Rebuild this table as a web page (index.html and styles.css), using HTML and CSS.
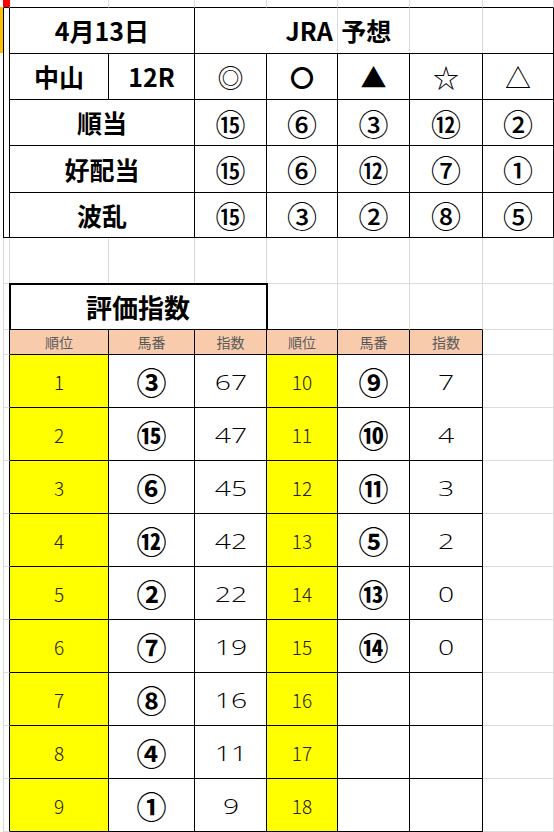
FILE: index.html
```html
<!DOCTYPE html>
<html lang="ja">
<head>
<meta charset="utf-8">
<title>JRA 予想</title>
<link rel="stylesheet" href="styles.css">
</head>
<body>
<div class="page">
  <div class="sheet">
    <!-- row 0 -->
    <div class="c a bb"></div><div class="c bb"></div><div class="c bb"></div><div class="c bb"></div><div class="c bb"></div><div class="c bb"></div><div class="c bb"></div><div class="c bb"></div>
    <!-- row 1 -->
    <div class="c a bl k rows5"></div>
    <div class="c k span2 big">4月13日</div>
    <div class="c k span5 big jra">JRA 予想</div>
    <!-- row 2 -->
    <div class="c k big">中山</div>
    <div class="c k big">12R</div>
    <div class="c k sym">◎</div>
    <div class="c k sym bold">〇</div>
    <div class="c k sym">▲</div>
    <div class="c k sym">☆</div>
    <div class="c k sym">△</div>
    <!-- row 3 -->
    <div class="c k span2 big">順当</div>
    <div class="c k cn">⑮</div><div class="c k cn">⑥</div><div class="c k cn">③</div><div class="c k cn">⑫</div><div class="c k cn">②</div>
    <!-- row 4 -->
    <div class="c k span2 big">好配当</div>
    <div class="c k cn">⑮</div><div class="c k cn">⑥</div><div class="c k cn">⑫</div><div class="c k cn">⑦</div><div class="c k cn">①</div>
    <!-- row 5 -->
    <div class="c k span2 big">波乱</div>
    <div class="c k cn">⑮</div><div class="c k cn">③</div><div class="c k cn">②</div><div class="c k cn">⑧</div><div class="c k cn">⑤</div>
    <!-- row 6 -->
    <div class="c a"></div><div class="c"></div><div class="c"></div><div class="c"></div><div class="c"></div><div class="c"></div><div class="c"></div><div class="c"></div>
    <!-- row 7 -->
    <div class="c a"></div>
    <div class="c span3 title">評価指数</div>
    <div class="c bb"></div><div class="c bb"></div><div class="c bb"></div>
    <div class="c"></div>
    <!-- row 8 header -->
    <div class="c a br"></div>
    <div class="c k hd">順位</div><div class="c k hd">馬番</div><div class="c k hd">指数</div>
    <div class="c k hd">順位</div><div class="c k hd">馬番</div><div class="c k hd">指数</div>
    <div class="c"></div>
    <!-- data rows -->
    <div class="c a br"></div>
    <div class="c k rank">1</div><div class="c k horse">③</div><div class="c k idx"><span>67</span></div>
    <div class="c k rank">10</div><div class="c k horse">⑨</div><div class="c k idx"><span>7</span></div>
    <div class="c"></div>

    <div class="c a br"></div>
    <div class="c k rank">2</div><div class="c k horse">⑮</div><div class="c k idx"><span>47</span></div>
    <div class="c k rank">11</div><div class="c k horse">⑩</div><div class="c k idx"><span>4</span></div>
    <div class="c"></div>

    <div class="c a br"></div>
    <div class="c k rank">3</div><div class="c k horse">⑥</div><div class="c k idx"><span>45</span></div>
    <div class="c k rank">12</div><div class="c k horse">⑪</div><div class="c k idx"><span>3</span></div>
    <div class="c"></div>

    <div class="c a br"></div>
    <div class="c k rank">4</div><div class="c k horse">⑫</div><div class="c k idx"><span>42</span></div>
    <div class="c k rank">13</div><div class="c k horse">⑤</div><div class="c k idx"><span>2</span></div>
    <div class="c"></div>

    <div class="c a br"></div>
    <div class="c k rank">5</div><div class="c k horse">②</div><div class="c k idx"><span>22</span></div>
    <div class="c k rank">14</div><div class="c k horse">⑬</div><div class="c k idx"><span>0</span></div>
    <div class="c"></div>

    <div class="c a br"></div>
    <div class="c k rank">6</div><div class="c k horse">⑦</div><div class="c k idx"><span>19</span></div>
    <div class="c k rank">15</div><div class="c k horse">⑭</div><div class="c k idx"><span>0</span></div>
    <div class="c"></div>

    <div class="c a br"></div>
    <div class="c k rank">7</div><div class="c k horse">⑧</div><div class="c k idx"><span>16</span></div>
    <div class="c k rank">16</div><div class="c k horse"></div><div class="c k idx"></div>
    <div class="c"></div>

    <div class="c a br"></div>
    <div class="c k rank">8</div><div class="c k horse">④</div><div class="c k idx"><span>11</span></div>
    <div class="c k rank">17</div><div class="c k horse"></div><div class="c k idx"></div>
    <div class="c"></div>

    <div class="c a br"></div>
    <div class="c k rank">9</div><div class="c k horse">①</div><div class="c k idx"><span>9</span></div>
    <div class="c k rank">18</div><div class="c k horse"></div><div class="c k idx"></div>
    <div class="c"></div>
  </div>
  <div class="mark-red"></div>
  <div class="mark-yellow"></div>
</div>
</body>
</html>
```

FILE: styles.css
```css
html, body {
  margin: 0;
  padding: 0;
  background: #fff;
}
body {
  font-family: "Noto Sans CJK JP", "Noto Sans", sans-serif;
  color: #000;
}
.page {
  position: relative;
  width: 554px;
  height: 832px;
  overflow: hidden;
}
.sheet {
  margin-left: 3px;
  display: grid;
  grid-template-columns: 7px 99px 86px 72px 71px 72px 73px 71px;
  grid-template-rows: 8px 46px 46px 46px 47px 45px 46px 46px 25px repeat(9, 53px);
}
.c {
  box-sizing: border-box;
  border-right: 1px solid #dcdcdc;
  border-bottom: 1px solid #dcdcdc;
  display: flex;
  align-items: center;
  justify-content: center;
  min-width: 0;
  white-space: nowrap;
  line-height: 1;
}
.a { border-left: 1px solid #dcdcdc; }
.bl { border-left-color: #000; }
.br { border-right-color: #000; }
.bb { border-bottom-color: #000; }
.k { border-right-color: #000; border-bottom-color: #000; }
.span2 { grid-column: span 2; }
.span3 { grid-column: span 3; }
.span5 { grid-column: span 5; }
.rows5 { grid-row: span 5; }

.big { font-size: 25px; font-weight: 700; }
.jra {
  padding-right: 71px;
  background-image: linear-gradient(#dcdcdc, #dcdcdc), linear-gradient(#dcdcdc, #dcdcdc), linear-gradient(#dcdcdc, #dcdcdc);
  background-size: 1px 100%;
  background-repeat: no-repeat;
  background-position: 142px 0, 214px 0, 287px 0;
  word-spacing: 3px;
}
.sym { font-size: 26px; }
.bold { font-weight: 700; font-size: 24px; }
.cn { font-size: 30px; font-weight: 500; }
.title {
  outline: 2px solid #000;
  outline-offset: -1px;
  font-size: 26px;
  font-weight: 700;
}
.hd {
  background: #f8cbad;
  color: #595959;
  font-size: 14px;
}
.rank {
  background: #ffff00;
  color: #222;
  font-size: 19px;
  font-weight: 300;
}
.horse { font-size: 30px; font-weight: 700; }
.idx {
  font-family: "Open Sans", "DejaVu Sans", sans-serif;
  font-size: 21px;
  font-weight: 300;
  color: #000;
  padding-top: 3px;
}
.idx span {
  display: inline-block;
  transform: scaleX(1.35);
}
.mark-red {
  position: absolute;
  left: 3px;
  top: 0;
  width: 7px;
  height: 7px;
  background: #f00;
}
.mark-yellow {
  position: absolute;
  left: 0;
  top: 7px;
  width: 3px;
  height: 46px;
  background: #ffc000;
}
```
